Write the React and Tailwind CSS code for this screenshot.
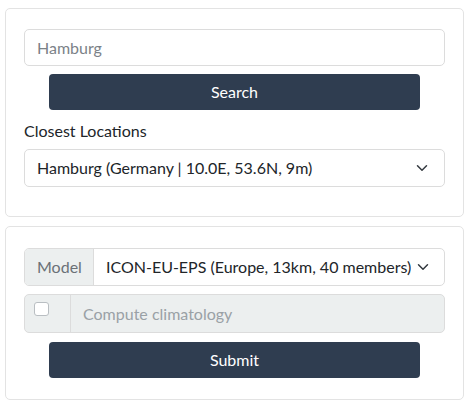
import React from 'react';

const Chevron = () => (
  <svg width="12" height="12" viewBox="0 0 16 16" fill="none" stroke="#343a40" strokeWidth="2" strokeLinecap="round" strokeLinejoin="round">
    <path d="M2 5l6 6 6-6" />
  </svg>
);

export default function App() {
  return (
    <div className="bg-white w-[474px] h-[408px] px-[5px] pt-[8px] text-[16px] text-[#212529]" style={{ fontFamily: 'Lato, "Noto Sans", sans-serif' }}>
      <div className="border border-[#e3e3e3] rounded-[5px] px-[18px] pt-[20px] pb-[29px] w-[459px]">
        <input
          className="block w-full h-[37px] border border-[#dcdcdc] rounded-[5px] px-[12px] placeholder-[#7b8288] outline-none"
          placeholder="Hamburg"
        />
        <div className="flex justify-center mt-[8px]">
          <button className="w-[371px] h-[36px] bg-[#2f3d50] text-white rounded-[4px]">Search</button>
        </div>
        <div className="mt-[9px] leading-[24px]">Closest Locations</div>
        <div className="mt-[6px] h-[38px] border border-[#dcdcdc] rounded-[5px] flex items-center justify-between pl-[12px] pr-[16px]">
          <span>Hamburg (Germany | 10.0E, 53.6N, 9m)</span>
          <Chevron />
        </div>
      </div>

      <div className="mt-[9px] border border-[#e3e3e3] rounded-[5px] px-[18px] pt-[21px] pb-[21px] w-[459px]">
        <div className="flex h-[38px] border border-[#dcdcdc] rounded-[5px] overflow-hidden">
          <div className="w-[69px] bg-[#ecefef] border-r border-[#dcdcdc] flex items-center pl-[12px] text-[#6b7177]">Model</div>
          <div className="flex-1 flex items-center pl-[12px] pr-[15px] min-w-0">
            <span className="flex-1 whitespace-nowrap overflow-hidden">ICON-EU-EPS (Europe, 13km, 40 members)</span>
            <span className="shrink-0 pl-[6px]"><Chevron /></span>
          </div>
        </div>
        <div className="flex h-[39px] mt-[8px] border border-[#dcdcdc] rounded-[5px] overflow-hidden bg-[#ecefef]">
          <div className="w-[46px] border-r border-[#dcdcdc] pl-[9px] pt-[7px]">
            <div className="w-[15px] h-[14px] bg-white border border-[#b9bec2] rounded-[3px]" />
          </div>
          <div className="flex-1 flex items-center pl-[12px] text-[#9aa1a6]">Compute climatology</div>
        </div>
        <div className="flex justify-center mt-[9px]">
          <button className="w-[371px] h-[36px] bg-[#2f3d50] text-white rounded-[4px]">Submit</button>
        </div>
      </div>
    </div>
  );
}
